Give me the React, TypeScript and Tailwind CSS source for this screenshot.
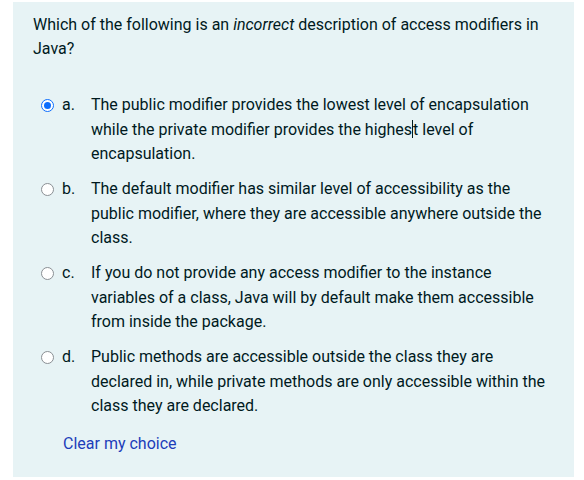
import React from 'react';

const options = [
    { letter: 'a.', text: 'The public modifier provides the lowest level of encapsulation while the private modifier provides the highest level of encapsulation.', checked: true },
    { letter: 'b.', text: 'The default modifier has similar level of accessibility as the public modifier, where they are accessible anywhere outside the class.' },
    { letter: 'c.', text: 'If you do not provide any access modifier to the instance variables of a class, Java will by default make them accessible from inside the package.' },
    { letter: 'd.', text: 'Public methods are accessible outside the class they are declared in, while private methods are only accessible within the class they are declared.' },
];

function Radio({ checked }: { checked?: boolean }) {
    if (checked) return (
        <span className="w-[13px] h-[13px] rounded-full border-[1.5px] border-[#0d6efd] bg-white flex items-center justify-center shrink-0">
            <span className="w-[7px] h-[7px] rounded-full bg-[#0d6efd]" />
        </span>
    );
    return <span className="w-[13px] h-[13px] rounded-full border border-[#8a8f94] bg-white shrink-0" />;
}

export default function App() {
    return (
        <div className="bg-white w-[584px] h-[480px] pt-[2px] pl-[13px]" style={{ fontFamily: 'Roboto, "Liberation Sans", sans-serif' }}>
            <div className="w-[561px] h-[475px] bg-[#e7f3f5] text-[#001a1e] text-[16px] leading-[24px] pl-[20px] pr-[20px] pt-[11px]">
                {/* Question */}
                <p>
                    Which of the following is an <em>incorrect</em> description of access modifiers in Java?
                </p>

                {/* Answers */}
                <div className="flex flex-col gap-[10.5px] mt-[32px]">
                    {options.map((o, i) => (
                        <div key={i} className="flex items-start pl-[8px]">
                            <div className="h-[24px] flex items-center"><Radio checked={o.checked} /></div>
                            <span className="w-[17px] ml-[8px] shrink-0">{o.letter}</span>
                            <p className="ml-[12px] w-[462px] leading-[24.5px]">
                                {i === 0 ? (
                                    <>The public modifier provides the lowest level of encapsulation while the private modifier provides the highes<span className="inline-block w-0 h-[18px] border-l border-[#001a1e] align-[-3px]" />t level of encapsulation.</>
                                ) : o.text}
                            </p>
                        </div>
                    ))}
                </div>

                <p className="mt-[13.5px] ml-[30px] text-[#1d3dba]">Clear my choice</p>
            </div>
        </div>
    );
}
